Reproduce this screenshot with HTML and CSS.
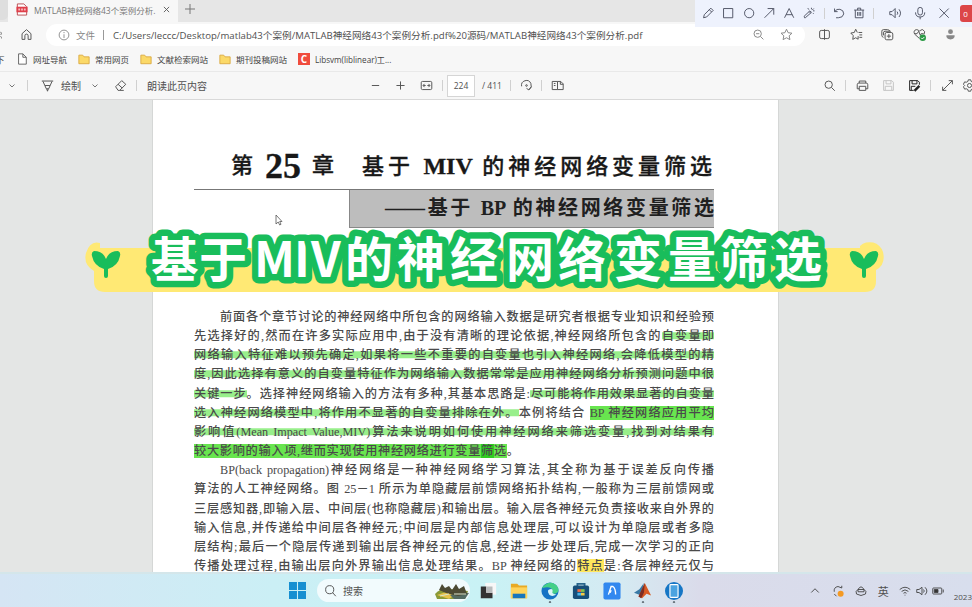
FILE: index.html
```
<!DOCTYPE html>
<html lang="zh-CN">
<head>
    <meta charset="UTF-8">
    <title>MATLAB神经网络43个案例分析.pdf</title>
    <link rel="stylesheet" href="styles.css">
</head>
<body>
    <div class="browser">
        <!-- Pestañas -->
        <div class="tab-bar">
            <div class="tab-prev"></div>
            <div class="tab">
                <svg class="pdf-icon" viewBox="0 0 12 14"><path d="M1 1h7l3 3v9H1z" fill="#fff" stroke="#b84a4f"/><path d="M0 4h12v6H0z" fill="#df3e49"/><path d="M2 7h8" stroke="#f6b9bd" stroke-width="2" stroke-dasharray="2 1"/></svg>
                <span class="tab-title">MATLAB神经网络43个案例分析.</span>
                <svg class="tab-close" viewBox="0 0 8 8"><path d="M1 1l6 6M7 1L1 7"/></svg>
            </div>
            <svg class="tab-new" viewBox="0 0 10 10"><path d="M5 0v10M0 5h10"/></svg>
        </div>

        <div class="address-row">
            <svg class="reload" viewBox="0 0 4 14"><path d="M0 3q3 0 2 3H0M0 9q3 0 2 3"/></svg>
            <svg class="icon home" viewBox="0 0 16 16"><path d="M2.500 7L8 2l5.500 5v7H10V9.500a2 2 0 0 0-4 0V14H2.500z"/></svg>
            <div class="address">
                <svg class="icon info" viewBox="0 0 16 16"><circle cx="8" cy="8" r="6.500"/><path d="M8 7v5M8 4v1.500"/></svg>
                <span class="scheme">文件</span>
                <span class="bar"></span>
                <span class="url">C:/Users/leccc/Desktop/matlab43个案例/MATLAB神经网络43个案例分析.pdf%20源码/MATLAB神经网络43个案例分析.pdf</span>
                <svg class="icon faint zoom-out" viewBox="0 0 16 16"><circle cx="7" cy="7" r="4.500"/><path d="M10.500 10.500L14 14M5 7h4"/></svg>
                <svg class="icon faint star" viewBox="0 0 16 16"><path d="M8 1.500l2 4.300 4.700.6-3.400 3.200.9 4.700L8 12l-4.200 2.300.9-4.700L1.300 6.400 6 5.800z"/></svg>
            </div>
            <div class="address-tools">
                <svg class="icon" viewBox="0 0 16 16"><rect x="2" y="3" width="12" height="10" rx="2"/><path d="M8 1.500v13"/></svg>
                <svg class="icon" viewBox="0 0 16 16"><path d="M9 5.500L7 1.500 5.300 5.500 1 6.200l3 3.200-.6 4.600L7 12l3 1.800V10M10.500 5.500H15M11.500 8.500H15M11.500 11.500H15"/></svg>
                <svg class="icon" viewBox="0 0 16 16"><path d="M3 11.500Q1 11 1 9V4q0-2 2-2h5q2 0 3 2"/><rect x="5" y="5.500" width="9.500" height="9" rx="2"/><path d="M9.700 7.500v5M7.200 10h5"/><path d="M3 9V6q0-2 2-2h7"/></svg>
                <svg class="icon" viewBox="0 0 16 16"><path d="M8 13L2 7.500Q0 3 4 2q3 0 4 2 1-2 4-2 4 2 1.500 6M2 7h3l2-3 2 5 1-2h3"/><circle cx="12" cy="12" r="4" fill="#2b9a45" stroke="none"/><path d="M10 12l1.500 1.500L14 11" stroke="#fff"/></svg>
                <svg class="icon avatar" viewBox="0 0 16 16"><circle cx="8" cy="4.500" r="3"/><path d="M3 9h10v2q-1 3-5 3t-5-3z"/></svg>
            </div>
        </div>

        <div class="bookmarks">
            <span class="bm-cut">下</span>
            <svg class="bm-icon" viewBox="0 0 12 14"><path d="M2 1h5l4 4v8H2zM7 1v4h4" fill="#fff" stroke="#555"/></svg>
            <span class="bm b1">网址导航</span>
            <svg class="bm-icon" viewBox="0 0 14 14"><path d="M1 2.500h4.500l1.500 2h6v8H1z" fill="#fbd968" stroke="#d8a63d"/></svg>
            <span class="bm b2">常用网页</span>
            <svg class="bm-icon" viewBox="0 0 14 14"><path d="M1 2.500h4.500l1.500 2h6v8H1z" fill="#fbd968" stroke="#d8a63d"/></svg>
            <span class="bm b3">文献检索网站</span>
            <svg class="bm-icon" viewBox="0 0 14 14"><path d="M1 2.500h4.500l1.500 2h6v8H1z" fill="#fbd968" stroke="#d8a63d"/></svg>
            <span class="bm b4">期刊投稿网站</span>
            <span class="bm-c">C</span>
            <span class="bm b5">Libsvm(liblinear)工...</span>
        </div>

        <!-- Barra de herramientas del PDF -->
        <div class="pdf-bar">
            <div class="pdf-left">
                <svg class="chev" viewBox="0 0 6 4"><path d="M.5.5L3 3 5.500.5"/></svg>
                <span class="sep s1"></span>
                <svg class="icon pen" viewBox="0 0 16 16"><path d="M1 2.500h14M2.500 3l4 9h3l4-9M5 8h6M7 12l1 3 1-3"/></svg>
                <span class="draw">绘制</span>
                <svg class="chev" viewBox="0 0 6 4"><path d="M.5.5L3 3 5.500.5"/></svg>
                <svg class="icon eraser" viewBox="0 0 16 16"><path d="M2 9.500L9.500 2l5 4.500L7 14H5zM5 6.500l5 4.500M7 14h5"/></svg>
                <span class="sep s2"></span>
                <span class="read">朗读此页内容</span>
            </div>
            <div class="pdf-center">
                <svg class="icon" viewBox="0 0 16 16"><path d="M3.500 8h9"/></svg>
                <svg class="icon plus" viewBox="0 0 16 16"><path d="M3 8h10M8 3v10"/></svg>
                <svg class="icon fit" viewBox="0 0 16 16"><rect x="1.500" y="3" width="13" height="10" rx="1.500"/><path d="M4 8h3M9 8h3M5.500 6L3.800 8l1.700 2M10.500 6l1.700 2-1.700 2"/></svg>
                <span class="sep"></span>
                <span class="page-no">224</span>
                <span class="page-total">/ 411</span>
                <span class="sep"></span>
                <svg class="icon rot" viewBox="0 0 16 16"><path d="M2 9a6 6 0 1 1 9 4M14 9.500L11 13.500 8 11.500"/><circle cx="8" cy="8" r="1"/></svg>
                <span class="sep"></span>
                <svg class="icon rot" viewBox="0 0 16 16"><path d="M8 3H1.500v10H8zM8 3h4l3 3v7H8M11.500 3v3.500H15M3.500 5.500h2M3.500 8h2"/></svg>
            </div>
            <div class="pdf-right">
                <svg class="icon" viewBox="0 0 16 16"><circle cx="7" cy="7" r="4.500"/><path d="M10.500 10.500L14.500 14.500"/></svg>
                <span class="sep"></span>
                <svg class="icon" viewBox="0 0 16 16"><path d="M4 5V2.500h8V5M4 12H1.500V7q0-2 2-2h9q2 0 2 2v5H12M4 9h8v5H4z"/></svg>
                <svg class="icon pale" viewBox="0 0 16 16"><path d="M2 2h10l2 2v10H2zM5 2v4h6V2M4 14V9h8v5"/></svg>
                <svg class="icon dark" viewBox="0 0 16 16"><path d="M7 14H2V2h10l2 2v3M5 2v4h6V2M4 14V9h5"/><path d="M8 14.500l6-6" stroke-width="3"/></svg>
                <span class="sep"></span>
                <svg class="icon" viewBox="0 0 16 16"><path d="M9.500 2H14v4.500M14 2L2 14M2 9.500V14h4.500"/></svg>
                <svg class="icon" viewBox="0 0 16 16"><path d="M6.500 1h3l.5 2 2 1 2-.5 1.500 3L14 8l1.500 1.500-1.500 3-2-.5-2 1-.5 2h-3L6 13l-2-1-2 .5-1.500-3L2 8 .5 6.500l1.500-3L4 4l2-1z"/><circle cx="8" cy="8" r="2.500"/></svg>
            </div>
        </div>

        <!-- Documento -->
        <div class="viewer">
            <div class="page">
                <div class="chapter"><span class="ch-a">第</span><b>25</b><span class="ch-c">章</span><span class="ch-title">基于 <em>MIV</em> 的神经网络变量筛选</span></div>
                <div class="subtitle-row">
                    <div class="subtitle">——基于 BP 的神经网络变量筛选</div>
                </div>
                <div class="text">
                    <p class="first">前面各个章节讨论的神经网络中所包含的网络输入数据是研究者根据专业知识和经验预</p>
                    <p>先选择好的,然而在许多实际应用中,由于没有清晰的理论依据,神经网络所包含的<mark>自变量即</mark></p>
                    <p><mark>网络输入特征难以预先确定,如果将一些不重要的自变量也引入神经网络,会降低模型的精</mark></p>
                    <p><mark>度,因此选择有意义的自变量特征作为网络输入数据常常是应用神经网络分析预测问题中很</mark></p>
                    <p><mark>关键一步</mark>。选择神经网络输入的方法有多种,其基本思路是:<mark>尽可能将作用效果显著的自变量</mark></p>
                    <p><mark>选入神经网络模型中,将作用不显著的自变量排除在外。</mark>本例将结合 <mark class="solid">BP 神经网络应用平均</mark></p>
                    <p><mark>影响值(Mean Impact Value,MIV)算法来说明如何使用神经网络来筛选变量,找到对结果有</mark></p>
                    <p class="short"><mark class="solid">较大影响的输入项,继而实现使用神经网络进行变量<span class="deep">筛</span>选</mark>。</p>
                    <p class="first">BP(back propagation)神经网络是一种神经网络学习算法,其全称为基于误差反向传播</p>
                    <p>算法的人工神经网络。图 25－1 所示为单隐藏层前馈网络拓扑结构,一般称为三层前馈网或</p>
                    <p>三层感知器,即输入层、中间层(也称隐藏层)和输出层。输入层各神经元负责接收来自外界的</p>
                    <p>输入信息,并传递给中间层各神经元;中间层是内部信息处理层,可以设计为单隐层或者多隐</p>
                    <p>层结构;最后一个隐层传递到输出层各神经元的信息,经进一步处理后,完成一次学习的正向</p>
                    <p>传播处理过程,由输出层向外界输出信息处理结果。BP 神经网络的<mark class="yellow">特点</mark>是:各层神经元仅与</p>
                </div>
            </div>
        </div>

        <div class="taskbar">
            <div class="task-main">
                <svg class="win" viewBox="0 0 16 16"><path d="M0 0h7.500v7.500H0zM8.500 0H16v7.500H8.500zM0 8.500h7.500V16H0zM8.500 8.500H16V16H8.500z" fill="#168fd1"/></svg>
                <div class="search">
                    <svg class="icon" viewBox="0 0 16 16"><circle cx="7" cy="7" r="5"/><path d="M10.500 10.500L14.500 15"/></svg>
                    <span>搜索</span>
                    <svg class="scene" viewBox="0 0 36 18"><path d="M1 12q5-6 15-5l18 2-3 8H3z" fill="#8a9a38"/><path d="M3 13l12-4 6 4-6 4z" fill="#e4c24b"/><path d="M16 13l9-3 10 1-4 6H20z" fill="#536b62"/><path d="M5 8l3-6 3 4 4-2 3 4 4-6 3 5 5-3 3 8-9 2-12-3z" fill="#4c4a34"/><path d="M20 12h12M6 14l9-2" stroke="#d9e6d0"/></svg>
                </div>
                <svg class="app" viewBox="0 0 20 20"><path d="M7 1h12v13H7z" fill="#f7f7f7"/><path d="M2 5h6v7h7v6H2z" fill="#333"/><path d="M8 5h7v7H8z" fill="#b9bcbd"/></svg>
                <svg class="app" viewBox="0 0 20 20"><path d="M1 2h7l2 2h9v14H1z" fill="#e8aa25"/><path d="M1 6h18v12H1z" fill="#ffd45b"/><path d="M3 13h14v5H3z" fill="#1876bd"/></svg>
                <svg class="app run" viewBox="0 0 20 24"><circle cx="10" cy="10" r="9.500" fill="#1673c4"/><path d="M1 7q4-7 12-6 6 2 6.500 8-1 5-7 4-2-1 0-4-2-5-11.500-2z" fill="#45cf87"/><path d="M8 9q5-3 5 1-2 3 4 4-5 3-8 0-2-2-1-5z" fill="#d9f5f7"/><circle cx="10" cy="22.500" r="1.300" fill="#6c7880"/></svg>
                <svg class="app" viewBox="0 0 20 20"><path d="M6 5V2h8v3" fill="none" stroke="#28648c" stroke-width="2"/><rect x="1" y="4" width="18" height="15" rx="2" fill="#174e79"/><path d="M6 8h4v3H6z" fill="#ee6948"/><path d="M10 8h4v3h-4z" fill="#85c34b"/><path d="M6 12h4v3H6z" fill="#48b8ed"/><path d="M10 12h4v3h-4z" fill="#f5cb44"/></svg>
                <svg class="app" viewBox="0 0 20 20"><rect x=".5" y=".5" width="19" height="19" rx="2" fill="#3288ef"/><path d="M6 14l3-9h2q3 2 3 9M9 9l-1 3" fill="none" stroke="#fff" stroke-width="1.500"/></svg>
                <svg class="app run" viewBox="0 0 20 24"><path d="M0 12l6-4 5-7-3 14z" fill="#3979a5"/><path d="M5 16L12 1l7 14-5-2-5 5z" fill="#d85a24"/><path d="M12 1l-1 11-3 6-3-2z" fill="#7e2e24"/><circle cx="10" cy="22.500" r="1.300" fill="#6c7880"/></svg>
                <svg class="app run" viewBox="0 0 20 24"><circle cx="10" cy="10" r="10" fill="#1676c5"/><rect x="5.500" y="3" width="9" height="14" rx="1" fill="#4ba3e0" stroke="#fff" stroke-width="1.300"/><circle cx="10" cy="22.500" r="1.300" fill="#6c7880"/></svg>
            </div>
            <div class="tray">
                <svg class="icon" viewBox="0 0 16 16"><path d="M3 10l5-5 5 5"/></svg>
                <svg class="icon" viewBox="0 0 16 16"><path d="M3 9q-1-6 5-7l5 2V1M3 12l3 3"/><circle cx="11.500" cy="11.500" r="4" fill="#f49a24" stroke="none"/></svg>
                <svg class="icon" viewBox="0 0 16 16"><path d="M4 6q4-7 8 0 4 2 2 6-6 4-12 0-2-4 2-6zM4 6h8v3H4z"/></svg>
                <span class="ime">英</span>
                <svg class="icon" viewBox="0 0 16 16"><path d="M1 6q7-6 14 0M3.500 8.500q4.500-4 9 0M6 11q2-2 4 0M8 13v1"/></svg>
                <svg class="icon" viewBox="0 0 16 16"><path d="M1 6h3l4-3v10l-4-3H1zM10 6q2 2 0 4M12 3q5 5 0 10"/></svg>
                <svg class="icon" viewBox="0 0 16 16"><rect x="1" y="4" width="12" height="8" rx="1"/><path d="M3 6h5v4H3z" fill="#333"/><path d="M15 6v4"/></svg>
                <span class="date">2023</span>
            </div>
        </div>

        <!-- Barra flotante de anotación -->
        <div class="float-bar">
            <svg class="icon" viewBox="0 0 16 16"><path d="M2 14l1-4 8.500-8.500 3 3L6 13zM9.500 3.500l3 3"/></svg>
            <svg class="icon" viewBox="0 0 16 16"><path d="M2 2h12v12H2z"/></svg>
            <svg class="icon" viewBox="0 0 16 16"><circle cx="8" cy="8" r="6"/></svg>
            <svg class="icon" viewBox="0 0 16 16"><path d="M2 14L14 2M6 2h8v8"/></svg>
            <svg class="icon" viewBox="0 0 16 16"><path d="M2 14L8 2l6 12M4 10h8"/></svg>
            <svg class="icon" viewBox="0 0 16 16"><path d="M2 14l-.5-2L9 5l2 2-8 7zM8 6l2 2M11 1v2M15 5h-2M14 2l-2 2M14 9l-1-1M6 2l2 1"/></svg>
            <span class="sep"></span>
            <svg class="icon" viewBox="0 0 16 16"><path d="M2 2v4h4M2 6q3-4 7-3 5 1 5 6-1 5-7 5H4"/></svg>
            <svg class="icon" viewBox="0 0 16 16"><path d="M1.500 4h13M6 4V1.500h4V4M3 4v10h10V4M6 6.500v5M8 6.500v5M10 6.500v5"/></svg>
            <span class="sep"></span>
            <svg class="icon wide sound" viewBox="0 0 16 16"><path d="M1 6h3l4-4v12l-4-4H1zM10.500 6q2 2 0 4M13 3q4 5 0 10"/></svg>
            <svg class="icon wide" viewBox="0 0 16 16"><rect x="5" y="0.500" width="6" height="10" rx="3"/><path d="M2 7q0 6 6 6t6-6M8 13v3"/></svg>
            <svg class="icon wide" viewBox="0 0 16 16"><path d="M2 2l12 12M14 2L2 14"/></svg>
            <span class="rec">0</span>
        </div>

        <!-- Título superpuesto -->
        <svg class="banner" viewBox="0 0 820 80">
            <path class="banner-bg" d="M25 23H785V21a14 14 0 0 1 23 6q3 13-7 18v11q0 11-11 11H30q-11 0-11-11V46Q8 40 11 28q4-13 14-10z"/>
            <path class="leaf" d="M31 34Q34 26 43 26q3 1 2 5-2 10-12 13v7q0 2-2 2t-2-2v-7Q19 41 17 31q-1-4 2-5 9 0 12 8z"/>
            <path class="leaf" transform="translate(758 0)" d="M31 34Q34 26 43 26q3 1 2 5-2 10-12 13v7q0 2-2 2t-2-2v-7Q19 41 17 31q-1-4 2-5 9 0 12 8z"/>
            <text class="banner-text" y="52" x="76 124 179 219 236 270 322 375 431 483 539 593 645 699">基于MIV的神经网络变量筛选</text>
        </svg>
        <svg class="cursor" viewBox="0 0 8 12"><path d="M1 1v9l2.200-2 1.500 3 1.300-.7-1.300-2.800H7z" fill="#fff" stroke="#555" stroke-width=".8"/></svg>
    </div>
</body>
</html>
```
FILE: styles.css
```
:root {
    --chrome: #f7f7f7;
    --line: #d9d9d9;
    --ink: #505050;
    --green: #19bd5b;
    --yellow: #ffe974;
}

* {
    box-sizing: border-box;
}

body {
    margin: 0;
    overflow: hidden;
    font-family: "Open Sans", "Noto Sans CJK SC", sans-serif;
    color: var(--ink);
}

.browser {
    position: relative;
    width: 972px;
    height: 607px;
    overflow: hidden;
    display: flex;
    flex-direction: column;
    background: var(--chrome);
}

svg {
    display: block;
    flex: none;
}

span {
    white-space: nowrap;
}

.icon {
    width: 13px;
    height: 13px;
    fill: none;
    stroke: #555;
    stroke-width: 1.2;
}

.icon.faint { stroke: #888; }
.icon.pale { stroke: #c4c4c4; }
.icon.dark { stroke: #222; }

.sep {
    width: 1px;
    height: 11px;
    background: #d0d0d0;
    flex: none;
}

/* pestañas */
.tab-bar {
    height: 22px;
    flex: none;
    display: flex;
    background: #e6e6e6;
}

.tab-prev {
    width: 8px;
    height: 20px;
    background: #dedede;
    border-radius: 0 0 5px 0;
}

.tab {
    width: 170px;
    display: flex;
    align-items: center;
    padding: 0 7px 3px 8px;
    background: var(--chrome);
}

.pdf-icon {
    width: 12px;
    height: 13px;
}

.tab-title {
    width: 123px;
    margin-left: 6px;
    font-size: 8.5px;
    color: #777;
}

.tab-close {
    width: 7px;
    height: 7px;
    margin-left: 6px;
    stroke: #555;
}

.tab-new {
    width: 10px;
    height: 10px;
    margin: 4px 0 0 7px;
    stroke: #777;
}

/* direcciones */
.address-row {
    height: 25px;
    flex: none;
    display: flex;
    align-items: center;
}

.reload {
    width: 3px;
    height: 10px;
    fill: none;
    stroke: #777;
}

.home {
    margin-left: 17px;
}

.address {
    width: 759px;
    height: 22px;
    margin-left: 13px;
    padding-left: 12px;
    display: flex;
    align-items: center;
    background: #fff;
    border-radius: 11px;
}

.info {
    stroke: #888;
    width: 12px;
    height: 12px;
}

.scheme {
    margin-left: 6px;
    font-size: 9.5px;
    color: #888;
}

.bar {
    width: 1px;
    height: 10px;
    margin: 0 9px 0 8px;
    background: #999;
}

.url {
    width: 531px;
    font-size: 9.6px;
    letter-spacing: 0.03px;
}

.zoom-out {
    margin-left: 108px;
}

.star {
    margin-left: 15px;
}

.address-tools {
    display: flex;
    gap: 18.5px;
    margin-left: 13px;
}

.avatar {
    fill: #888;
    stroke: none;
}

/* marcadores */
.bookmarks {
    height: 25px;
    flex: none;
    display: flex;
    align-items: center;
    border-bottom: 1px solid #e9e9e9;
    font-size: 8.5px;
    color: #444;
}

.bm-cut {
    width: 16px;
    text-indent: -4px;
}

.bm-icon {
    width: 12px;
    height: 12px;
    margin-right: 5px;
}

.bm { margin-right: 10px; }
.b1, .b2 { width: 35px; }
.b3, .b4 { width: 52px; }

.bm-c {
    width: 12px;
    height: 12px;
    margin-right: 5px;
    background: #f04c3d;
    color: #fff;
    font-weight: bold;
    font-size: 10px;
    line-height: 12px;
    text-align: center;
}

.b5 {
    font-size: 8.1px;
}

/* barra pdf */
.pdf-bar {
    height: 28px;
    flex: none;
    display: flex;
    align-items: center;
    border-bottom: 1px solid var(--line);
    font-size: 10px;
}

.pdf-left,
.pdf-center,
.pdf-right {
    display: flex;
    align-items: center;
}

.pdf-left {
    width: 369px;
    padding-left: 9px;
}

.chev {
    width: 6px;
    height: 4px;
    fill: none;
    stroke: #777;
}

.s1 { margin: 0 13px 0 12px; }
.draw { margin: 0 11px 0 7px; }
.eraser { margin-left: 16px; }
.s2 { margin: 0 10px 0 9px; }

.pdf-center .plus { margin-left: 12px; }
.pdf-center .fit { margin: 0 9px 0 13px; }
.pdf-center .rot { margin: 0 8.5px; }

.page-no {
    width: 28px;
    height: 22px;
    margin: 0 7px 0 4px;
    border: 1px solid #d5d5d5;
    background: #fff;
    font-size: 8.5px;
    line-height: 20px;
    text-align: center;
}

.page-total {
    width: 20px;
    margin-right: 8px;
    font-size: 8.5px;
}

.pdf-right {
    margin-left: auto;
    margin-right: -4px;
    gap: 9.5px;
}

.pdf-right .pale,
.pdf-right .dark {
    margin-left: 3.5px;
}

/* documento */
.viewer {
    flex: 1;
    min-height: 0;
    background: #e4e6e5;
    overflow: hidden;
}

.page {
    width: 627px;
    height: 100%;
    margin-left: 152px;
    padding: 43px 64px 0 41px;
    background: #fff;
    border: solid #d5d7d6;
    border-width: 0 1px;
}

.chapter {
    height: 46px;
    padding-left: 37px;
    display: flex;
    align-items: center;
    font: 500 22px/38px "Liberation Serif", "Noto Sans CJK SC", serif;
    color: #181818;
    white-space: nowrap;
    -webkit-text-stroke: 0.3px #181818;
}

.chapter b {
    width: 37px;
    margin: 0 10px 0 12px;
    font-size: 36px;
}

.chapter em {
    font-style: normal;
    font-weight: bold;
    font-size: 24px;
}

.ch-title {
    width: 350px;
    margin-left: 28px;
    text-align: justify;
    text-align-last: justify;
}

.subtitle-row {
    display: flex;
    justify-content: flex-end;
    border-top: 1px solid #777;
}

.subtitle {
    width: 365px;
    height: 38px;
    padding: 0 0 0 35px;
    background: #bdbdbd;
    border: 1px solid #888;
    border-top: 0;
    border-right: 0;
    font: bold 20px/37px "Liberation Serif", "Noto Sans CJK SC", serif;
    color: #202020;
    white-space: nowrap;
    text-align-last: justify;
}

.text {
    margin-top: 80px;
    font: 500 12.2px/19.17px "Liberation Serif", "Noto Sans CJK SC", serif;
    color: #4a4a4a;
}

.text p {
    height: 19.17px;
    margin: 0;
    white-space: nowrap;
    text-align: justify;
    text-align-last: justify;
}

.text .first { padding-left: 26px; }
.text .short { width: 325px; }

mark {
    color: inherit;
    background: linear-gradient(transparent 22%, #98ef8b 26%, #98ef8b 72%, transparent 76%);
}

mark.solid { background: #68e54f; }
mark.yellow { background: #ffe75c; }
.deep { background: #30cc22; }

/* barra de tareas */
.taskbar {
    height: 35px;
    flex: none;
    display: flex;
    align-items: center;
    border-top: 2px solid #d4e6ea;
    background: linear-gradient(90deg, #d5e5f4 0%, #cbeff5 28%, #c9f2f5 50%, #d5eaf2 64%, #dadbea 72%, #d8deed 100%);
}

.task-main {
    display: flex;
    align-items: center;
    margin-left: 289px;
}

.win {
    width: 17px;
    height: 17px;
}

.search {
    width: 153px;
    height: 23px;
    margin: 0 9px 0 11px;
    padding-left: 7px;
    display: flex;
    align-items: center;
    gap: 6px;
    background: #f2fbfd;
    border-radius: 12px;
    font-size: 10px;
}

.scene {
    width: 36px;
    height: 18px;
    margin-left: auto;
}

.app {
    width: 18px;
    height: 18px;
    margin-right: 13px;
}

.app.run {
    height: 21.6px;
    margin-top: 3.6px;
}

.tray {
    display: flex;
    align-items: center;
    margin-left: auto;
    gap: 4.5px;
}

.tray .icon {
    width: 12px;
    height: 12px;
    stroke: #444;
}

.tray .icon:nth-child(-n+3) {
    margin-right: 6.5px;
}

.ime {
    margin-right: 6px;
    font-size: 11px;
}

.date {
    margin: 11px 0 0 5px;
    font-size: 8px;
}

/* capas flotantes */
.float-bar {
    position: absolute;
    top: 0;
    right: 0;
    width: 277px;
    height: 27px;
    padding-left: 7px;
    display: flex;
    align-items: center;
    gap: 8px;
    background: #eef2fd;
    overflow: hidden;
}

.float-bar .icon {
    width: 12.3px;
    height: 12.3px;
    stroke: #4b4f60;
}

.float-bar .wide {
    margin-left: 4px;
}

.float-bar .sound {
    margin-left: 7px;
}

.rec {
    width: 12px;
    height: 17px;
    margin-left: 2px;
    padding-left: 3px;
    flex: none;
    background: #dc4648;
    border-radius: 3px 0 0 3px;
    color: #fff;
    font-size: 8px;
    line-height: 17px;
}

.banner {
    position: absolute;
    left: 75px;
    top: 225px;
    width: 820px;
    height: 80px;
}

.banner-bg { fill: var(--yellow); }
.leaf { fill: var(--green); }

.banner-text {
    font: 700 48px "Noto Sans CJK SC", sans-serif;
    fill: #fff;
    stroke: var(--green);
    stroke-width: 13px;
    stroke-linejoin: round;
    paint-order: stroke;
}

.cursor {
    position: absolute;
    left: 275px;
    top: 214px;
    width: 8px;
    height: 12px;
}
```
